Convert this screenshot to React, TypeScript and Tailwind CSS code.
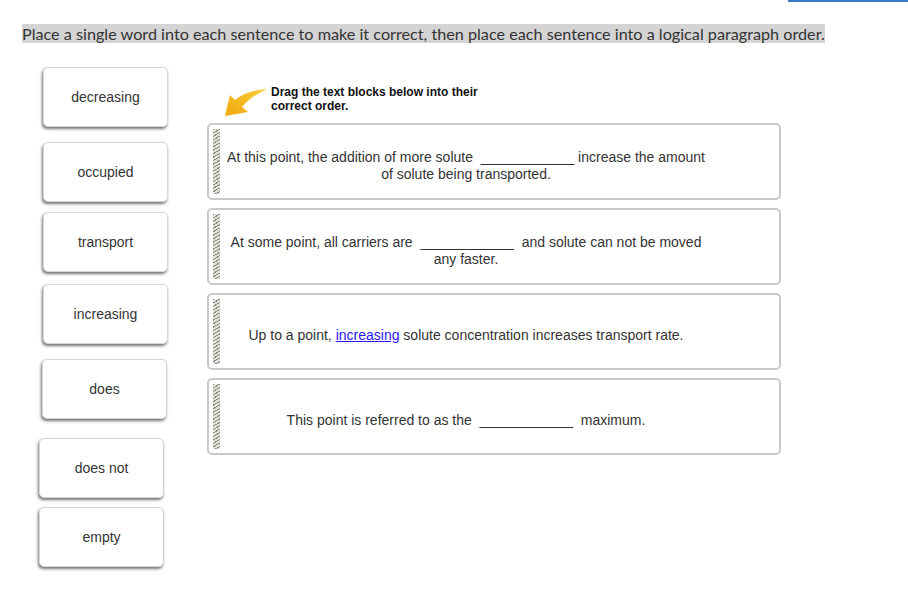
import React from 'react';

const words = [
  { label: 'decreasing', cls: 'ml-[43px] mt-0' },
  { label: 'occupied', cls: 'ml-[43px] mt-[15px]' },
  { label: 'transport', cls: 'ml-[43px] mt-[10px]' },
  { label: 'increasing', cls: 'ml-[43px] mt-[12px]' },
  { label: 'does', cls: 'ml-[42px] mt-[15px]' },
  { label: 'does not', cls: 'ml-[39px] mt-[19px]' },
  { label: 'empty', cls: 'ml-[39px] mt-[9px]' },
];

const blank = '____________';
const sp = '\u00a0\u00a0';

const Grip = () => (
  <div className="w-[7px] self-stretch my-[4px] shrink-0 bg-[repeating-linear-gradient(150deg,#8a8a80_0px,#8a8a80_1px,#e2e2dc_1px,#e2e2dc_3px)]" />
);

const Arrow = () => (
  <svg width="46" height="34" viewBox="0 0 46 34" className="shrink-0">
    <defs>
      <linearGradient id="arrowFill" x1="0" y1="1" x2="1" y2="0">
        <stop offset="0" stopColor="#f2a60c" />
        <stop offset="1" stopColor="#f8cd3a" />
      </linearGradient>
    </defs>
    <path
      d="M3 31 L8 10 L13 15 C21 8 31 5 45 4 C35 9 26 14 20 22 L26 27 Z"
      fill="url(#arrowFill)"
    />
  </svg>
);

const SentenceBox = ({ children }: { children: React.ReactNode }) => (
  <div className="flex h-[77px] w-[574px] rounded-[5px] border-2 border-[#c9c9c9] bg-white pl-[4px]">
    <Grip />
    <div className="flex w-[490px] items-center justify-center pl-[2px] pt-[8px] text-center text-[14px] leading-[17px] text-[#333]">
      <p>{children}</p>
    </div>
  </div>
);

export default function App() {
  return (
    <div className="relative min-h-[602px] w-[908px] bg-white font-['Liberation_Sans',Arial,sans-serif]">
      <div className="flex justify-end">
        <div className="h-[2px] w-[120px] bg-[#3a7bc8]" />
      </div>

      <div className="pl-[22px] pt-[23px] font-['Lato',sans-serif] text-[16.2px] leading-[18px] text-[#333]">
        <span className="bg-[#d4d4d4]">
          Place a single word into each sentence to make it correct, then place each sentence into a logical paragraph order.
        </span>
      </div>

      <div className="mt-[24px] flex">
        <div className="flex w-[207px] shrink-0 flex-col">
          {words.map((w) => (
            <div
              key={w.label}
              className={`flex h-[60px] w-[125px] items-center justify-center rounded-[5px] border border-[#d6d6d6] bg-white text-[14px] text-[#333] shadow-[-1px_2px_3px_rgba(0,0,0,0.55)] ${w.cls}`}
            >
              {w.label}
            </div>
          ))}
        </div>

        <div className="flex flex-col pt-[18px]">
          <div className="flex pl-[15px]">
            <Arrow />
            <p className="ml-[3px] text-[12px] font-bold leading-[14px] text-[#111]">
              Drag the text blocks below into their
              <br />
              correct order.
            </p>
          </div>

          <div className="mt-[4px] flex flex-col gap-[8px]">
            <SentenceBox>
              At this point, the addition of more solute{sp}{blank} increase the amount of solute being transported.
            </SentenceBox>
            <SentenceBox>
              At some point, all carriers are{sp}{blank}{sp}and solute can not be moved any faster.
            </SentenceBox>
            <SentenceBox>
              Up to a point,{' '}
              <a href="#" className="text-[#2a17f5] underline">
                increasing
              </a>{' '}
              solute concentration increases transport rate.
            </SentenceBox>
            <SentenceBox>
              This point is referred to as the{sp}{blank}{sp}maximum.
            </SentenceBox>
          </div>
        </div>
      </div>
    </div>
  );
}
